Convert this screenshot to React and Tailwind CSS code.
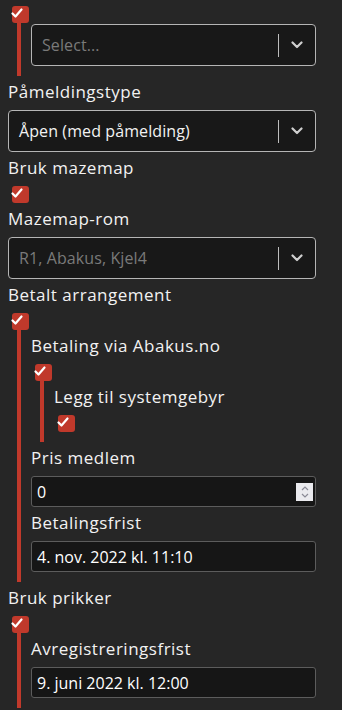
import React from 'react';

const font = { fontFamily: '"Open Sans", Lato, sans-serif' };

const Check = () => (
  <div className="ml-1 w-[17px] h-[17px] rounded-[3px] bg-[#c0392b] relative shrink-0">
    <svg className="absolute left-[-1px] top-[2px]" width="12" height="10" viewBox="0 0 12 10">
      <path d="M1.5 5.5 L4.5 8.5 L10.5 1.5" fill="none" stroke="white" strokeWidth="2.2" strokeLinecap="round" strokeLinejoin="round" />
    </svg>
  </div>
);

const Nested = ({ children }) => (
  <div className="ml-[9px] border-l-4 border-[#c0392b] pl-[10px] pb-[10px]">{children}</div>
);

const Label = ({ children }) => (
  <div className="pt-[4px] pb-[6px] text-[17px] leading-[24px] tracking-[0.5px] text-[#f2f2f2]">{children}</div>
);

const Chevron = () => (
  <svg width="12" height="8" viewBox="0 0 12 8">
    <path d="M1.5 1.5 L6 6 L10.5 1.5" fill="none" stroke="#cfcfcf" strokeWidth="2.2" strokeLinecap="round" strokeLinejoin="round" />
  </svg>
);

const Select = ({ value, placeholder }) => (
  <div className="h-[42px] rounded-[4px] border border-[#b5b5b5] bg-[#181818] flex items-center">
    <div className={`flex-1 pl-[10px] text-[16px] tracking-[0.1px] ${value ? 'text-[#f2f2f2]' : 'text-[#7a7a7a]'}`}>
      {value || placeholder}
    </div>
    <div className="w-px h-[23px] bg-[#bdbdbd]" />
    <div className="w-[36px] flex justify-center">
      <Chevron />
    </div>
  </div>
);

const Input = ({ value, spinner }) => (
  <div
    className="h-[31px] rounded-[3px] border border-[#5c5c5c] bg-[#161616] flex items-center pl-[5px] pr-[2px] text-[16px] text-white"
    style={{ fontFamily: '"Open Sans", Roboto, sans-serif' }}
  >
    <div className="flex-1">{value}</div>
    {spinner && (
      <div className="w-[17px] h-[18px] bg-[#eaeaee] flex flex-col items-center justify-center gap-[2px]">
        <svg width="8" height="5" viewBox="0 0 8 5">
          <path d="M1 4 L4 1 L7 4" fill="none" stroke="#8a8a95" strokeWidth="1.2" />
        </svg>
        <svg width="8" height="5" viewBox="0 0 8 5">
          <path d="M1 1 L4 4 L7 1" fill="none" stroke="#8a8a95" strokeWidth="1.2" />
        </svg>
      </div>
    )}
  </div>
);

export default function App() {
  return (
    <div className="min-h-[710px] bg-[#262626] px-2 pt-[6px] pr-[26px]" style={font}>
      <Check />
      <Nested>
        <div className="pt-[1px]">
          <Select placeholder="Select..." />
        </div>
      </Nested>

      <Label>Påmeldingstype</Label>
      <Select value="Åpen (med påmelding)" />

      <Label>Bruk mazemap</Label>
      <Check />

      <Label>Mazemap-rom</Label>
      <Select placeholder="R1, Abakus, Kjel4" />

      <Label>Betalt arrangement</Label>
      <Check />
      <Nested>
        <Label>Betaling via Abakus.no</Label>
        <Check />
        <Nested>
          <Label>Legg til systemgebyr</Label>
          <Check />
        </Nested>
        <Label>Pris medlem</Label>
        <Input value="0" spinner />
        <Label>Betalingsfrist</Label>
        <Input value="4. nov. 2022 kl. 11:10" />
      </Nested>

      <Label>Bruk prikker</Label>
      <Check />
      <Nested>
        <Label>Avregistreringsfrist</Label>
        <Input value="9. juni 2022 kl. 12:00" />
      </Nested>
    </div>
  );
}
